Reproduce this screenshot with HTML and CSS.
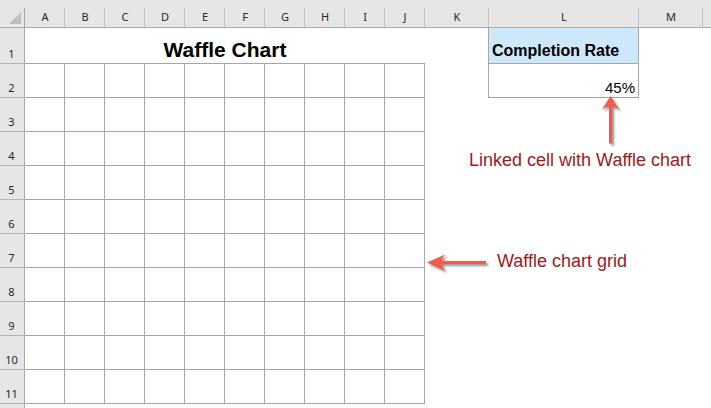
FILE: index.html
```html
<!DOCTYPE html>
<html>
<head>
<meta charset="utf-8">
<link rel="stylesheet" href="styles.css">
</head>
<body>
<div class="sheet">
  <div class="corner"><svg width="24" height="27" viewBox="0 0 24 27"><polygon points="21,12 21,24 9,24" fill="#bfbfbf"/></svg></div>
  <div class="colhead">A</div>
  <div class="colhead">B</div>
  <div class="colhead">C</div>
  <div class="colhead">D</div>
  <div class="colhead">E</div>
  <div class="colhead">F</div>
  <div class="colhead">G</div>
  <div class="colhead">H</div>
  <div class="colhead">I</div>
  <div class="colhead">J</div>
  <div class="colhead">K</div>
  <div class="colhead">L</div>
  <div class="colhead">M</div>
  <div class="colhead rest"></div>

  <div class="rowhead r1">1</div>
  <div class="rowhead r2">2</div>
  <div class="rowhead r3">3</div>
  <div class="rowhead r4">4</div>
  <div class="rowhead r5">5</div>
  <div class="rowhead r6">6</div>
  <div class="rowhead r7">7</div>
  <div class="rowhead r8">8</div>
  <div class="rowhead r9">9</div>
  <div class="rowhead r10">10</div>
  <div class="rowhead r11">11</div>
  <div class="rowhead r12"></div>

  <div class="title">Waffle Chart</div>
  <div class="k1"></div>
  <div class="k2"></div>
  <div class="l1">Completion Rate</div>
  <div class="l2">45%</div>

  <div class="waffle" id="waffle"></div>

  <div class="note note-linked">Linked cell with Waffle chart</div>
  <div class="note note-grid">Waffle chart grid</div>

  <svg class="arrow arrow-up" width="30" height="60" viewBox="598 92 30 60">
    <defs>
      <filter id="sh1" x="-50%" y="-50%" width="200%" height="200%">
        <feGaussianBlur in="SourceAlpha" stdDeviation="1.2"/>
        <feOffset dx="1.5" dy="1.5" result="b"/>
        <feComponentTransfer><feFuncA type="linear" slope="0.45"/></feComponentTransfer>
        <feMerge><feMergeNode/><feMergeNode in="SourceGraphic"/></feMerge>
      </filter>
    </defs>
    <path filter="url(#sh1)" fill="#f25a4f" d="M610.5 96 L619 109.5 Q614 106.5 612 106.5 L612 143.5 L609 143.5 L609 106.5 Q607 106.5 602 109.5 Z"/>
  </svg>

  <svg class="arrow arrow-left" width="66" height="26" viewBox="424 250 66 26">
    <defs>
      <filter id="sh2" x="-50%" y="-50%" width="200%" height="200%">
        <feGaussianBlur in="SourceAlpha" stdDeviation="1.2"/>
        <feOffset dx="1.5" dy="1.5" result="b"/>
        <feComponentTransfer><feFuncA type="linear" slope="0.45"/></feComponentTransfer>
        <feMerge><feMergeNode/><feMergeNode in="SourceGraphic"/></feMerge>
      </filter>
    </defs>
    <path filter="url(#sh2)" fill="#f25a4f" d="M427 262.5 L445 254.5 Q441.5 259.5 441.5 261 L486 261 L486 264 L441.5 264 Q441.5 265.5 445 271 Z"/>
  </svg>
</div>
<script>
  var w = document.getElementById('waffle');
  for (var i = 0; i < 100; i++) {
    var c = document.createElement('div');
    c.className = 'wcell';
    w.appendChild(c);
  }
</script>
</body>
</html>
```

FILE: styles.css
```css
html, body {
  margin: 0;
  padding: 0;
  background: #ffffff;
}

.sheet {
  position: relative;
  width: 711px;
  height: 408px;
  overflow: hidden;
  display: grid;
  grid-template-columns: 25px repeat(10, 40px) 64px 150px 64px 1fr;
  grid-template-rows: 28px 36px repeat(10, 34px) 1fr;
  font-family: "Liberation Sans", Arial, sans-serif;
  background: #ffffff;
}

.corner {
  grid-column: 1;
  grid-row: 1;
  box-sizing: border-box;
  background: linear-gradient(#a6a6a6, #a6a6a6) right bottom / 1px 19px no-repeat, #e6e6e6;
  border-bottom: 1px solid #ababab;
}

.corner svg {
  display: block;
}

.colhead {
  grid-row: 1;
  box-sizing: border-box;
  background: linear-gradient(#c4c4c4, #c4c4c4) right bottom / 1px 19px no-repeat, #e6e6e6;
  border-bottom: 1px solid #ababab;
  padding-top: 7px;
  height: 28px;
  line-height: 19px;
  text-align: center;
  font-family: "Noto Sans", "Open Sans", sans-serif;
  font-size: 11px;
  color: #262626;
}

.colhead.rest {
  background: #e6e6e6;
}

.rowhead {
  grid-column: 1;
  box-sizing: border-box;
  background: #e6e6e6;
  border-right: 1px solid #a6a6a6;
  border-bottom: 1px solid #b4b4b4;
  display: flex;
  align-items: flex-end;
  justify-content: center;
  padding-bottom: 2px;
  padding-right: 1px;
  line-height: 14px;
  font-family: "Noto Sans", "Open Sans", sans-serif;
  font-size: 11px;
  color: #262626;
}

.r1 { grid-row: 2; }
.r2 { grid-row: 3; }
.r3 { grid-row: 4; }
.r4 { grid-row: 5; }
.r5 { grid-row: 6; }
.r6 { grid-row: 7; }
.r7 { grid-row: 8; }
.r8 { grid-row: 9; }
.r9 { grid-row: 10; }
.r10 { grid-row: 11; }
.r11 { grid-row: 12; }
.r12 { grid-row: 13; border-bottom: none; }

.title {
  grid-column: 2 / 12;
  grid-row: 2;
  box-sizing: border-box;
  border-bottom: 1px solid #a6a6a6;
  display: flex;
  align-items: flex-end;
  justify-content: center;
  font-weight: bold;
  font-size: 21px;
  line-height: 24px;
  padding-bottom: 1px;
  color: #000000;
}

.k1 {
  grid-column: 12;
  grid-row: 2;
  border-right: 1px solid #a6a6a6;
}

.k2 {
  grid-column: 12;
  grid-row: 3;
  border-right: 1px solid #a6a6a6;
}

.l1 {
  grid-column: 13;
  grid-row: 2;
  box-sizing: border-box;
  background: #cce8fa;
  border-right: 1px solid #a6a6a6;
  border-bottom: 1px solid #a6a6a6;
  display: flex;
  align-items: flex-end;
  padding-left: 3px;
  padding-bottom: 3px;
  font-weight: bold;
  font-size: 16px;
  line-height: 18px;
  color: #000000;
}

.l2 {
  grid-column: 13;
  grid-row: 3;
  box-sizing: border-box;
  border-right: 1px solid #a6a6a6;
  border-bottom: 1px solid #a6a6a6;
  display: flex;
  align-items: flex-end;
  justify-content: flex-end;
  padding-right: 3px;
  padding-bottom: 1px;
  font-size: 15px;
  line-height: 17px;
  color: #000000;
}

.waffle {
  grid-column: 2 / 12;
  grid-row: 3 / 13;
  display: grid;
  grid-template-columns: repeat(10, 40px);
  grid-template-rows: repeat(10, 34px);
}

.wcell {
  box-sizing: border-box;
  border-right: 1px solid #a6a6a6;
  border-bottom: 1px solid #a6a6a6;
}

.note {
  position: absolute;
  font-size: 18px;
  line-height: 21px;
  color: #9c1a1a;
  white-space: nowrap;
}

.note-linked {
  left: 469px;
  top: 150px;
}

.note-grid {
  left: 497px;
  top: 251px;
}

.arrow {
  position: absolute;
  overflow: visible;
}

.arrow-up {
  left: 598px;
  top: 92px;
}

.arrow-left {
  left: 424px;
  top: 250px;
}
```
